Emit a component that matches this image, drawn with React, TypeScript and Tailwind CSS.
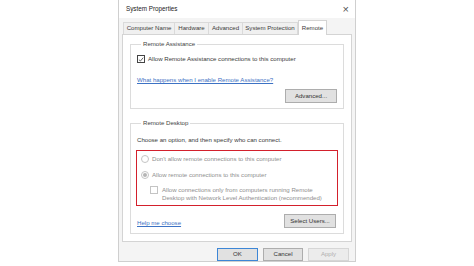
import React from "react";

function Btn({ label, className = "" }: { label: string; className?: string }) {
  return (
    <div
      className={`flex h-[14px] items-center justify-center border border-[#adadad] bg-[#e1e1e1] text-[#333] ${className}`}
    >
      {label}
    </div>
  );
}

function CheckBox({ checked, disabled }: { checked?: boolean; disabled?: boolean }) {
  return (
    <div
      className={`flex h-[8px] w-[8px] shrink-0 items-center justify-center border bg-white ${
        disabled ? "border-[#c4c4c4]" : "border-[#444]"
      }`}
    >
      {checked && (
        <svg width="7" height="7" viewBox="0 0 8 8">
          <path d="M1.2 4.2 L3.2 6.1 L6.9 1.6" fill="none" stroke="#333" strokeWidth="1" />
        </svg>
      )}
    </div>
  );
}

function Radio({ checked }: { checked?: boolean }) {
  return (
    <div className="flex h-[8px] w-[8px] shrink-0 items-center justify-center rounded-full border border-[#c4c4c4] bg-white">
      {checked && <div className="h-[4px] w-[4px] rounded-full bg-[#b5b5b5]" />}
    </div>
  );
}

const tabs = [
  { name: "Computer Name", w: "w-[52px]" },
  { name: "Hardware", w: "w-[34px]" },
  { name: "Advanced", w: "w-[34px]" },
  { name: "System Protection", w: "w-[55px]" },
];

export default function App() {
  return (
    <div
      className="flex h-[266px] w-[474px] justify-center overflow-hidden whitespace-nowrap bg-white text-[6.1px] leading-none text-[#3a3a3a]"
      style={{ fontFamily: '"Liberation Sans", Arial, sans-serif' }}
    >
      <div className="flex h-[262px] w-[238px] flex-col border-x border-b border-[#cfcfcf] bg-[#f4f4f4]">
        {/* title bar */}
        <div className="flex h-[18px] items-center justify-between bg-white pl-[7px] pr-[6px]">
          <span className="text-[6.3px] text-[#222]">System Properties</span>
          <span className="text-[11px] font-light text-[#555]">×</span>
        </div>

        {/* tabs */}
        <div className="mt-[2px] flex items-end pl-[4px] pr-[4px]">
          <div className="flex h-[14px] items-end">
            {tabs.map((t) => (
              <div
                key={t.name}
                className={`flex h-[12px] items-center justify-center border-t border-r border-[#dadada] first:border-l bg-[#f0f0f0] ${t.w}`}
              >
                {t.name}
              </div>
            ))}
            <div className="relative -mb-px flex h-[15px] w-[29px] items-center justify-center border-x border-t border-[#d4d4d4] bg-white">
              Remote
            </div>
          </div>
        </div>

        {/* tab page */}
        <div className="mx-[3px] flex h-[208px] flex-col border border-[#d4d4d4] bg-white px-[7px]">
          <fieldset className="mt-[6px] h-[68px] border border-[#dcdcdc] px-[6px]">
            <legend className="ml-[4px] px-[2px] text-[#444]">Remote Assistance</legend>
            <div className="mt-[8px] flex items-center gap-[3px]">
              <CheckBox checked />
              <span>Allow Remote Assistance connections to this computer</span>
            </div>
            <div className="mt-[14px] text-[#3d72c4] underline">
              What happens when I enable Remote Assistance?
            </div>
            <div className="mt-[6px] flex justify-end">
              <Btn label="Advanced..." className="w-[52px]" />
            </div>
          </fieldset>

          <fieldset className="mt-[11px] h-[114px] border border-[#dcdcdc] px-[5px]">
            <legend className="ml-[5px] px-[2px] text-[#444]">Remote Desktop</legend>
            <div className="mt-[11px] pl-[1px]">
              Choose an option, and then specify who can connect.
            </div>
            <div className="mt-[7px] flex h-[56px] flex-col border-[1.5px] border-[#d3202c] pl-[4px] pt-[4px] text-[#8f8f8f]">
              <div className="flex items-center gap-[3px]">
                <Radio />
                <span>Don't allow remote connections to this computer</span>
              </div>
              <div className="mt-[8px] flex items-center gap-[3px]">
                <Radio checked />
                <span>Allow remote connections to this computer</span>
              </div>
              <div className="ml-[9px] mt-[7px] flex items-start gap-[4px]">
                <CheckBox disabled />
                <span className="leading-[8px]">
                  Allow connections only from computers running Remote
                  <br />
                  Desktop with Network Level Authentication (recommended)
                </span>
              </div>
            </div>
            <div className="mt-[8px] flex items-end justify-between pr-[2px]">
              <span className="mb-[2px] ml-[1px] text-[#3d72c4] underline">Help me choose</span>
              <Btn label="Select Users..." className="w-[52px]" />
            </div>
          </fieldset>
        </div>

        {/* bottom buttons */}
        <div className="mt-[6px] flex justify-end gap-[5px] pr-[6px]">
          <div className="flex h-[13px] w-[41px] items-center justify-center border border-[#3d86d6] bg-[#e1e1e1] text-[#333]">
            OK
          </div>
          <div className="flex h-[13px] w-[40px] items-center justify-center border border-[#adadad] bg-[#e1e1e1] text-[#333]">
            Cancel
          </div>
          <div className="flex h-[13px] w-[41px] items-center justify-center border border-[#d6d6d6] bg-[#ececec] text-[#b0b0b0]">
            Apply
          </div>
        </div>
      </div>
    </div>
  );
}
